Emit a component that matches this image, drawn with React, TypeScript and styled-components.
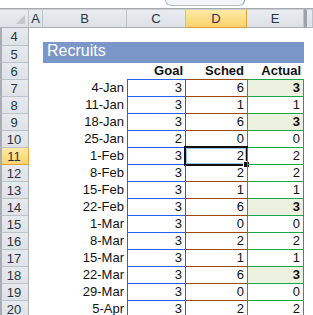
import React from "react";
import styled, { createGlobalStyle } from "styled-components";

const BLUE = "#2a5ef0";
const BROWN = "#9a4a0c";
const GREEN = "#16a84a";

const ROWS = [
  { n: 7, date: "4-Jan", goal: 3, sched: 6, actual: 3 },
  { n: 8, date: "11-Jan", goal: 3, sched: 1, actual: 1 },
  { n: 9, date: "18-Jan", goal: 3, sched: 6, actual: 3 },
  { n: 10, date: "25-Jan", goal: 2, sched: 0, actual: 0 },
  { n: 11, date: "1-Feb", goal: 3, sched: 2, actual: 2 },
  { n: 12, date: "8-Feb", goal: 3, sched: 2, actual: 2 },
  { n: 13, date: "15-Feb", goal: 3, sched: 1, actual: 1 },
  { n: 14, date: "22-Feb", goal: 3, sched: 6, actual: 3 },
  { n: 15, date: "1-Mar", goal: 3, sched: 0, actual: 0 },
  { n: 16, date: "8-Mar", goal: 3, sched: 2, actual: 2 },
  { n: 17, date: "15-Mar", goal: 3, sched: 1, actual: 1 },
  { n: 18, date: "22-Mar", goal: 3, sched: 6, actual: 3 },
  { n: 19, date: "29-Mar", goal: 3, sched: 0, actual: 0 },
  { n: 20, date: "5-Apr", goal: 3, sched: 2, actual: 2 },
];

const COLUMNS = ["A", "B", "C", "D", "E", ""];

const GlobalStyle = createGlobalStyle`
  html, body {
    margin: 0;
    background: #ffffff;
    overflow: hidden;
  }
  body {
    font-family: "Liberation Sans", Arial, sans-serif;
  }
`;

const Window = styled.div`
  width: 313px;
  height: 315px;
  overflow: hidden;
  background: #ffffff;
`;

const FormulaStrip = styled.div`
  height: 8px;
  display: grid;
  grid-template-columns: 165px 80px 1fr;
  border-bottom: 1px solid #a7abb0;
  background: #ffffff;
`;

const NameBoxTail = styled.div`
  grid-column: 2;
  height: 5px;
  border: 1px solid #b6bac0;
  border-top: none;
  border-radius: 0 0 14px 14px;
  background: #f3f4f6;
  border-right: 1px solid #8d9197;
`;

const Sheet = styled.div`
  display: grid;
  grid-template-columns: 29px 14px 84px 59px 61px 57px 1fr;
  grid-template-rows: 19px 18px repeat(15, 17px);
`;

const ColHeader = styled.div<{ $active?: boolean; $edge?: boolean }>`
  box-sizing: border-box;
  border-top: 1px solid #c9cdd2;
  border-bottom: 1px solid ${(p) => (p.$active ? "#e2a238" : "#a9b1bb")};
  border-right: 1px solid ${(p) => (p.$active ? "#e2a238" : "#bcc3cb")};
  border-left: ${(p) => (p.$edge ? "3px solid #9ea3a9" : "none")};
  background: ${(p) =>
    p.$active
      ? "linear-gradient(#fde9a6, #f9d46c)"
      : "linear-gradient(#e9ecf0, #dde1e6)"};
  color: #2a3448;
  font-size: 13px;
  line-height: 17px;
  text-align: center;
`;

const Corner = styled(ColHeader)`
  position: relative;
  &::after {
    content: "";
    position: absolute;
    right: 3px;
    bottom: 3px;
    border-style: solid;
    border-width: 0 0 9px 9px;
    border-color: transparent transparent #c4c8cd transparent;
  }
`;

const RowHeader = styled.div<{ $active?: boolean }>`
  box-sizing: border-box;
  border-left: 2px solid #a9adb3;
  border-bottom: 1px solid ${(p) => (p.$active ? "#e2a238" : "#bcc3cb")};
  border-right: 1px solid ${(p) => (p.$active ? "#e2a238" : "#a9b1bb")};
  background: ${(p) =>
    p.$active
      ? "linear-gradient(#fde9a6, #f9d46c)"
      : "linear-gradient(#e6e9ed, #dfe3e8)"};
  color: #2c3444;
  font-size: 13px;
  line-height: 17px;
  text-align: center;
  padding-right: 2px;
`;

const Cell = styled.div<{
  $left?: string;
  $right?: string;
  $bottom?: string;
  $bold?: boolean;
  $fill?: string;
}>`
  position: relative;
  box-sizing: border-box;
  background: ${(p) => p.$fill || "transparent"};
  border-left: ${(p) => (p.$left ? `1px solid ${p.$left}` : "none")};
  border-right: ${(p) => (p.$right ? `1px solid ${p.$right}` : "none")};
  border-bottom: ${(p) => (p.$bottom ? `1px solid ${p.$bottom}` : "none")};
  font-size: 13px;
  font-weight: ${(p) => (p.$bold ? 700 : 400)};
  line-height: 16px;
  text-align: right;
  padding-right: 3px;
  color: #111111;
  white-space: nowrap;
`;

const Title = styled.div`
  grid-column: 3 / span 4;
  background: #7b96c9;
  color: #ffffff;
  font-size: 16px;
  line-height: 18px;
  padding-left: 4px;
  margin-top: -4px;
`;

const Selection = styled.div`
  position: absolute;
  left: -2px;
  top: -2px;
  right: -1px;
  bottom: -2px;
  border: 2px solid #101010;
  box-shadow: inset 0 0 0 1px #9cc3f0;
  pointer-events: none;
`;

const FillHandle = styled.div`
  position: absolute;
  right: -4px;
  bottom: -4px;
  width: 5px;
  height: 5px;
  background: #101010;
  border: 1px solid #ffffff;
`;

const Blank = styled.div``;

const App = () => {
  return (
    <Window>
      <GlobalStyle />
      <FormulaStrip>
        <NameBoxTail />
      </FormulaStrip>
      <Sheet>
        <Corner />
        {COLUMNS.map((col) => (
          <ColHeader key={col || "F"} $active={col === "D"} $edge={col === ""}>
            {col}
          </ColHeader>
        ))}

        <RowHeader>4</RowHeader>
        <Blank style={{ gridColumn: "2 / span 6" }} />

        <RowHeader>5</RowHeader>
        <Blank />
        <Title>Recruits</Title>
        <Blank />

        <RowHeader>6</RowHeader>
        <Blank />
        <Blank />
        <Cell $bold $bottom={BLUE}>Goal</Cell>
        <Cell $bold $bottom={BROWN}>Sched</Cell>
        <Cell $bold $bottom={GREEN}>Actual</Cell>
        <Blank />

        {ROWS.map((r) => {
          const hit = r.actual === 3;
          return (
            <React.Fragment key={r.n}>
              <RowHeader $active={r.n === 11}>{r.n}</RowHeader>
              <Blank />
              <Cell>{r.date}</Cell>
              <Cell $left={BLUE} $right={BLUE} $bottom={BLUE}>
                {r.goal}
              </Cell>
              <Cell $bottom={BROWN}>
                {r.sched}
                {r.n === 11 && (
                  <Selection>
                    <FillHandle />
                  </Selection>
                )}
              </Cell>
              <Cell
                $left={GREEN}
                $right={GREEN}
                $bottom={GREEN}
                $bold={hit}
                $fill={hit ? "#ebf0df" : undefined}
              >
                {r.actual}
              </Cell>
              <Blank />
            </React.Fragment>
          );
        })}
      </Sheet>
    </Window>
  );
};

export default App;
